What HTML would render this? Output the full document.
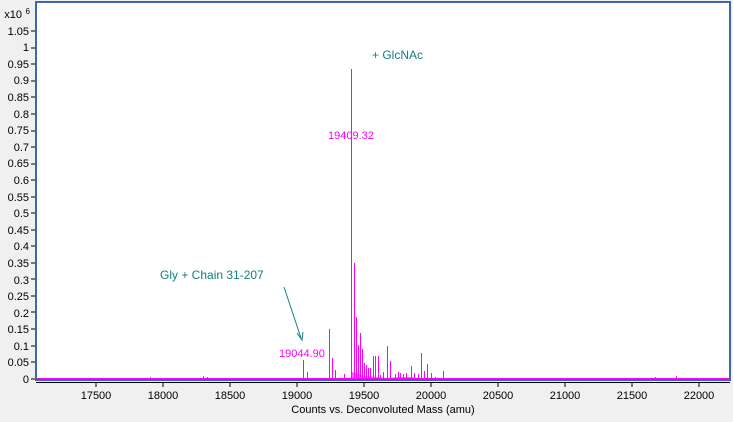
<!DOCTYPE html>
<html><head><style>
body{margin:0;background:#f0f0f0;width:733px;height:417px;overflow:hidden;font-family:"Liberation Sans",sans-serif;}
</style></head><body>
<svg width="733" height="417" xmlns="http://www.w3.org/2000/svg" font-family="Liberation Sans, sans-serif" font-size="11">
<rect x="36" y="2" width="694" height="378" fill="#fff" stroke="#3b69b0" stroke-width="2"/>
<g fill="#000" text-anchor="end" font-size="11">
<text x="22" y="18">x10</text><text x="30" y="14" font-size="8">6</text>
<text x="29" y="35">1.05</text><text x="29" y="51">1</text><text x="29" y="68">0.95</text><text x="29" y="84">0.9</text><text x="29" y="101">0.85</text><text x="29" y="118">0.8</text><text x="29" y="134">0.75</text><text x="29" y="151">0.7</text><text x="29" y="167">0.65</text><text x="29" y="184">0.6</text><text x="29" y="201">0.55</text><text x="29" y="217">0.5</text><text x="29" y="234">0.45</text><text x="29" y="250">0.4</text><text x="29" y="267">0.35</text><text x="29" y="284">0.3</text><text x="29" y="300">0.25</text><text x="29" y="317">0.2</text><text x="29" y="333">0.15</text><text x="29" y="350">0.1</text><text x="29" y="366">0.05</text><text x="29" y="383">0</text>
</g>
<g stroke="#000" stroke-width="1">
<path d="M31 31h4M31 48h4M31 64h4M31 81h4M31 97h4M31 114h4M31 131h4M31 147h4M31 164h4M31 180h4M31 197h4M31 213h4M31 230h4M31 246h4M31 263h4M31 279h4M31 296h4M31 312h4M31 329h4M31 346h4M31 362h4M31 379h4"/>
<path d="M36 382.5H730M96 382v5M163 382v5M230 382v5M297 382v5M364 382v5M431 382v5M498 382v5M565 382v5M632 382v5M699 382v5"/>
</g>
<g text-anchor="middle" font-size="11">
<text x="96" y="399">17500</text><text x="163" y="399">18000</text><text x="230" y="399">18500</text><text x="297" y="399">19000</text><text x="364" y="399">19500</text><text x="431" y="399">20000</text><text x="498" y="399">20500</text><text x="565" y="399">21000</text><text x="632" y="399">21500</text><text x="699" y="399">22000</text>
<text x="383" y="413">Counts vs. Deconvoluted Mass (amu)</text>
</g>
<path d="M350 379L352 372L358 374L366 376L376 377L386 378L400 377L410 377L420 378L440 378L450 379Z" fill="#ff66ff" stroke="none"/>
<g stroke="#ff00ff" stroke-width="1" shape-rendering="crispEdges">
<path d="M303.5 379V360M307.5 379V372M329.5 379V329M332.5 379V358M335.5 379V370M344.5 379V374M351.5 379V69M354.5 379V263M356.5 379V317M358.5 379V345M360.5 379V333M362.5 379V349M364.5 379V363M366.5 379V365M368.5 379V368M370.5 379V368M373.5 379V356M375.5 379V356M378.5 379V356M380.5 379V375M383.5 379V372M387.5 379V346M390.5 379V361M395.5 379V374M398.5 379V372M400.5 379V373M403.5 379V374M406.5 379V373M411.5 379V366M414.5 379V373M418.5 379V374M421.5 379V353M424.5 379V371M427.5 379V364M431.5 379V373M435.5 379V377M443.5 379V371M150.5 379V377M203.5 379V376M207.5 379V377M655.5 379V377M676.5 379V376M540.5 379V378M600.5 379V378"/>
<path d="M37 378.5H729"/>
</g>
<path d="M37 380H729" stroke="#4060c0" stroke-width="1.5"/>
<text x="328" y="139" fill="#ff00ff" font-size="11">19409.32</text>
<text x="279" y="357" fill="#ff00ff" font-size="11">19044.90</text>
<text x="372" y="59" fill="#138080" font-size="12">+ GlcNAc</text>
<text x="160" y="279" fill="#138080" font-size="12">Gly + Chain 31-207</text>
<path d="M284 287L301 338" stroke="#138080" stroke-width="1"/>
<path d="M297 333L302 340L303 332" stroke="#138080" fill="none" stroke-width="1"/>
</svg>
</body></html>
